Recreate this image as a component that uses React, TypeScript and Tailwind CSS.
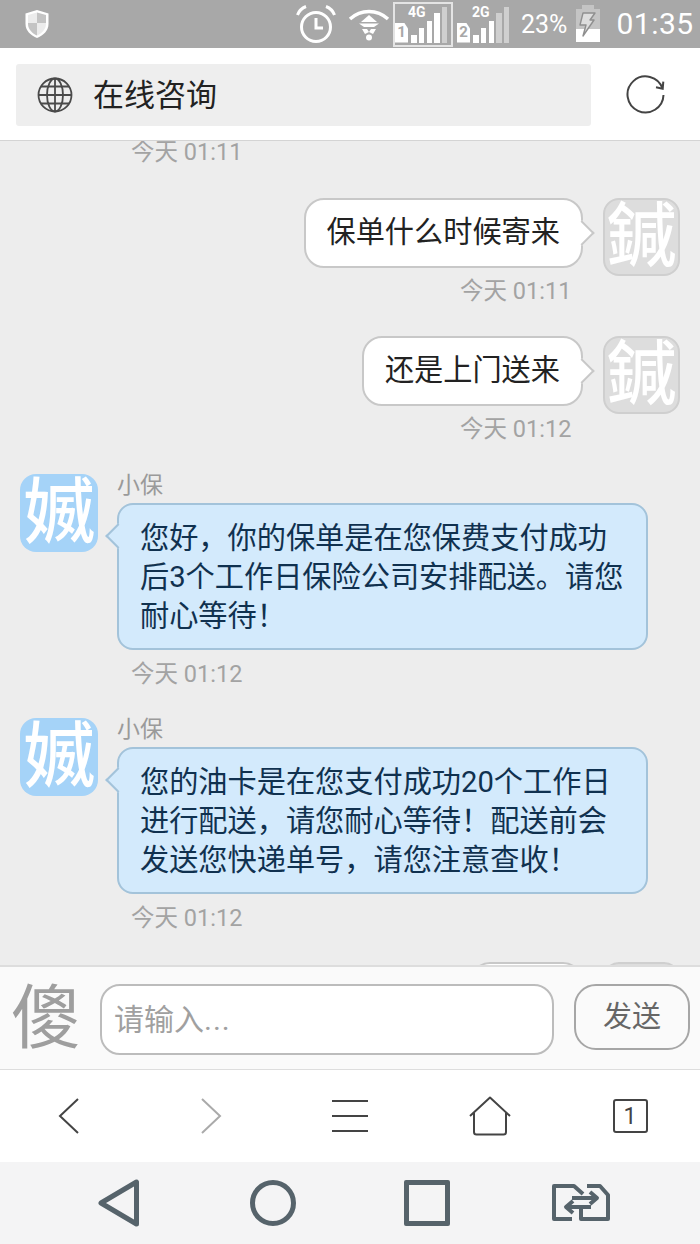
const cjk = "font-['Roboto','Noto_Sans_CJK_SC',sans-serif]";

function ShieldIcon() {
  return (
    <svg width="26" height="30" viewBox="0 0 26 30">
      <path d="M13 1 L24.5 4.5 V15 C24.5 22 19 26.5 13 29 C7 26.5 1.5 22 1.5 15 V4.5 Z" fill="#fff" />
      <path d="M13 3.5 L22 6 V14 H13 Z" fill="#c4c4c4" />
      <path d="M4 14 H13 V26.5 C8.5 24.5 4 20.5 4 15 Z" fill="#c4c4c4" />
      <path d="M4 6 L13 3.5 V14 H4 Z" fill="#ececec" />
      <path d="M13 14 H22 V15 C22 20.5 17.5 24.5 13 26.5 Z" fill="#ececec" />
    </svg>
  );
}

function AlarmIcon() {
  return (
    <svg width="40" height="38" viewBox="0 0 40 38" fill="none" stroke="#fff">
      <circle cx="20" cy="22" r="14.5" strokeWidth="3" />
      <path d="M20 13 V23 H27" strokeWidth="3" />
      <path d="M1.5 10 C3 6 6 3 10 1.5" strokeWidth="3" />
      <path d="M38.5 10 C37 6 34 3 30 1.5" strokeWidth="3" />
    </svg>
  );
}

function WifiIcon() {
  return (
    <svg width="42" height="34" viewBox="0 0 42 34">
      <path d="M2 12 C13 2 29 2 40 12" fill="none" stroke="#fff" strokeWidth="3.5" />
      <path d="M21 8 L29 15 H13 Z" fill="#fff" />
      <path d="M11 16.5 H31 L26 20 H16 Z" fill="#fff" />
      <path d="M14 22 L19 22 L21 25 L17 27 Z" fill="#fff" />
      <path d="M28 22 L23 22 L21 25 L25 27 Z" fill="#fff" />
      <circle cx="21" cy="30.5" r="3" fill="#fff" />
    </svg>
  );
}

function Signal({ sim, net, lit, boxed }: { sim: string; net: string; lit: number; boxed?: boolean }) {
  const levels = [8, 15, 22, 30, 36];
  return (
    <div className={`relative h-[45px] ${boxed ? 'w-[60px] border-2 border-[#e4e4e4]' : 'w-[54px]'}`}>
      <span className={`absolute text-[14px] leading-[15px] font-bold text-white ${boxed ? 'top-[1px] left-[13px]' : 'top-[3px] left-[16px]'}`}>{net}</span>
      <div className={`absolute flex items-end gap-[2.2px] ${boxed ? 'bottom-[2px] left-0' : 'bottom-[4px] left-[1px]'}`}>
        <div className="mr-[1px] flex h-[20px] w-[13px] items-center justify-center bg-white text-[15px] leading-none font-bold text-[#a8a8a8] [clip-path:polygon(0_0,70%_0,100%_30%,100%_100%,0_100%)]">{sim}</div>
        {levels.map((h, i) => (
          <div key={i} style={{ height: h }} className={`w-[5.5px] ${i < lit ? 'bg-white' : 'bg-[#cfcfcf]'}`} />
        ))}
      </div>
    </div>
  );
}

function BatteryIcon() {
  return (
    <svg width="24" height="38" viewBox="0 0 24 38">
      <rect x="6" y="0" width="12" height="4" fill="#c4c4c4" />
      <rect x="0" y="4" width="24" height="20" fill="#c4c4c4" />
      <rect x="0" y="24" width="24" height="13" fill="#fff" />
      <path d="M7 8 H19 L14 15 H18 L7 31 L10 20 H4 Z" fill="#dddddd" stroke="#8f8f8f" strokeWidth="1.4" strokeLinejoin="round" />
    </svg>
  );
}

function StatusBar() {
  return (
    <div className="flex h-[48px] items-center bg-[#a8a8a8] pl-[24px] text-white">
      <ShieldIcon />
      <div className="ml-[246px]"><AlarmIcon /></div>
      <div className="ml-[12px]"><WifiIcon /></div>
      <div className="ml-[3px]"><Signal sim="1" net="4G" lit={4} boxed /></div>
      <div className="ml-[3px]"><Signal sim="2" net="2G" lit={3} /></div>
      <span className="ml-[11px] text-[25px] leading-none">23%</span>
      <div className="ml-[9px]"><BatteryIcon /></div>
      <span className="ml-[16px] text-[30px] leading-none tracking-[0.5px]">01:35</span>
    </div>
  );
}

function Header() {
  return (
    <div className="flex h-[93px] items-center border-b border-[#d4d4d4] bg-white pt-[2px] pl-[16px]">
      <div className="flex h-[62px] w-[575px] items-center rounded-[3px] bg-[#eeeeee] pl-[21px]">
        <svg width="36" height="36" viewBox="0 0 36 36" fill="none" stroke="#4a4a4a" strokeWidth="1.8">
          <circle cx="18" cy="18" r="16.5" />
          <ellipse cx="18" cy="18" rx="8" ry="16.5" />
          <path d="M18 1.5 V34.5 M1.5 18 H34.5 M4 9.5 H32 M4 26.5 H32" />
        </svg>
        <span className="ml-[20px] text-[31px] leading-none text-[#222222]">在线咨询</span>
      </div>
      <svg className="ml-[34px]" width="40" height="40" viewBox="0 0 40 40" fill="none" stroke="#444444" strokeWidth="2">
        <path d="M37.5 13.5 A18 18 0 1 0 38.5 20" />
        <path d="M31 12.3 L37.7 13.7 L38.3 6.7" />
      </svg>
    </div>
  );
}

function RightMessage({ text, time }: { text: string; time: string }) {
  return (
    <div className="h-[138px] pr-[20px]">
      <div className="flex justify-end gap-[20px]">
        <div className="relative flex h-[70px] items-center rounded-[20px] border-2 border-[#c8c8c8] bg-white px-[21px] text-[29.2px] leading-none text-[#222222]">
          {text}
          <div className="absolute top-[24px] right-[-10px] h-[18px] w-[18px] rotate-45 border-t-2 border-r-2 border-[#c8c8c8] bg-white" />
        </div>
        <div className="flex h-[78px] w-[77px] items-center justify-center rounded-[16px] border-2 border-[#cfcfcf] bg-[#dddddd] text-[70px] leading-none font-medium text-white">鍼</div>
      </div>
      <div className="mr-[110px] flex justify-end">
        <span className="w-[110px] text-[23.5px] leading-[30px] whitespace-nowrap text-[#a3a3a3]">{time}</span>
      </div>
    </div>
  );
}

function LeftMessage({ lines, time }: { lines: string[]; time: string }) {
  return (
    <div className="flex h-[244px] pl-[20px]">
      <div className="flex h-[78px] w-[78px] items-center justify-center rounded-[16px] bg-[#a5d3f8] text-[72px] leading-none font-medium text-white">媙</div>
      <div className="ml-[19px] w-[531px]">
        <div className="h-[29px] text-[23px] leading-[23px] text-[#9a9a9a]">小保</div>
        <div className="relative flex h-[147px] flex-col justify-center rounded-[16px] border-2 border-[#a3c3da] bg-[#d3eafc] pt-[1px] pl-[21px] text-[29.2px] leading-[39px] text-[#10314f]">
          {lines.map((l) => (
            <div key={l} className="whitespace-nowrap">{l}</div>
          ))}
          <div className="absolute top-[22px] left-[-10px] h-[18px] w-[18px] rotate-45 border-b-2 border-l-2 border-[#a3c3da] bg-[#d3eafc]" />
        </div>
        <div className="mt-[9px] pl-[14px] text-[23.5px] leading-[30px] whitespace-nowrap text-[#a3a3a3]">{time}</div>
      </div>
    </div>
  );
}

function Chat() {
  return (
    <div className="h-[824px] overflow-hidden bg-[#ededed]">
      <div className="h-[57px] pl-[131px] text-[23.5px] leading-[23px] text-[#a3a3a3]">今天 01:11</div>
      <RightMessage text="保单什么时候寄来" time="今天 01:11" />
      <RightMessage text="还是上门送来" time="今天 01:12" />
      <LeftMessage
        lines={['您好，你的保单是在您保费支付成功', '后3个工作日保险公司安排配送。请您', '耐心等待！']}
        time="今天 01:12"
      />
      <LeftMessage
        lines={['您的油卡是在您支付成功20个工作日', '进行配送，请您耐心等待！配送前会', '发送您快递单号，请您注意查收！']}
        time="今天 01:12"
      />
      {/* next message, only its top edge shows above the input bar */}
      <div className="flex justify-end gap-[20px] pr-[20px]">
        <div className="h-[70px] w-[113px] rounded-[20px] border-2 border-[#c8c8c8] bg-white" />
        <div className="h-[78px] w-[77px] rounded-[16px] border-2 border-[#cfcfcf] bg-[#dddddd]" />
      </div>
    </div>
  );
}

function InputBar() {
  return (
    <div className="flex h-[105px] items-start border-t-2 border-b border-t-[#dddddd] border-b-[#dddddd] bg-[#fafafa] pt-[17px] pl-[11px]">
      <div className="w-[69px] text-[70px] leading-[70px] text-[#9e9e9e]">傻</div>
      <div className="ml-[20px] flex h-[71px] w-[454px] items-center rounded-[20px] border-2 border-[#bcbcbc] bg-white pl-[12px] text-[30px] leading-none text-[#a0a0a0]">请输入<span className="tracking-[1px]">...</span></div>
      <div className="ml-[20px] flex h-[66px] w-[116px] items-center justify-center rounded-[22px] border-2 border-[#a6a6a6] text-[29px] leading-none text-[#666666]">发送</div>
    </div>
  );
}

function BrowserNav() {
  return (
    <div className="grid h-[92px] grid-cols-5 items-center bg-white">
      <div className="flex justify-center pr-[3px]">
        <svg width="22" height="38" viewBox="0 0 22 38" fill="none" stroke="#444444" strokeWidth="2"><path d="M20 2 L2 19 L20 36" /></svg>
      </div>
      <div className="flex justify-center pl-[2px]">
        <svg width="22" height="38" viewBox="0 0 22 38" fill="none" stroke="#aaaaaa" strokeWidth="2"><path d="M2 2 L20 19 L2 36" /></svg>
      </div>
      <div className="flex justify-center">
        <svg width="36" height="34" viewBox="0 0 36 34" fill="none" stroke="#444444" strokeWidth="2"><path d="M0 2 H36 M0 17 H36 M0 32 H36" /></svg>
      </div>
      <div className="flex justify-center">
        <svg width="42" height="40" viewBox="0 0 42 40" fill="none" stroke="#444444" strokeWidth="2" strokeLinejoin="round"><path d="M1 20 L21 1.5 L41 20 M5 17 V36 Q5 38.5 7.5 38.5 H34.5 Q37 38.5 37 36 V17" /></svg>
      </div>
      <div className="flex justify-center">
        <div className="flex h-[34px] w-[35px] items-center justify-center rounded-[3px] border-2 border-[#444444] text-[23px] leading-none text-[#444444]">1</div>
      </div>
    </div>
  );
}

function SystemNav() {
  return (
    <div className="grid h-[82px] grid-cols-4 items-center bg-[#f4f4f5] px-[42px]">
      <div className="flex justify-center">
        <svg width="42" height="48" viewBox="0 0 42 48" fill="none" stroke="#56636b" strokeWidth="5" strokeLinejoin="round"><path d="M38.5 3 V45 L3 24 Z" /></svg>
      </div>
      <div className="flex justify-center">
        <div className="h-[46px] w-[46px] rounded-full border-[5px] border-[#56636b]" />
      </div>
      <div className="flex justify-center">
        <div className="h-[46px] w-[46px] rounded-[2px] border-[5px] border-[#56636b]" />
      </div>
      <div className="flex justify-center">
        <svg width="58" height="38" viewBox="0 0 58 38" fill="none" stroke="#56636b" strokeWidth="4" strokeLinejoin="round">
          <path d="M20 35 H2 V2 H22 L31 10 M29 24 V35 H56 V11 L48 2 H35" />
          <path d="M20 14 H44 M38 8 L45 14 L38 20" />
          <path d="M39 23 H15 M21 17 L14 23 L21 29" />
        </svg>
      </div>
    </div>
  );
}

export default function App() {
  return (
    <div className={`h-[1244px] w-[700px] overflow-hidden ${cjk}`}>
      <StatusBar />
      <Header />
      <Chat />
      <InputBar />
      <BrowserNav />
      <SystemNav />
    </div>
  );
}
